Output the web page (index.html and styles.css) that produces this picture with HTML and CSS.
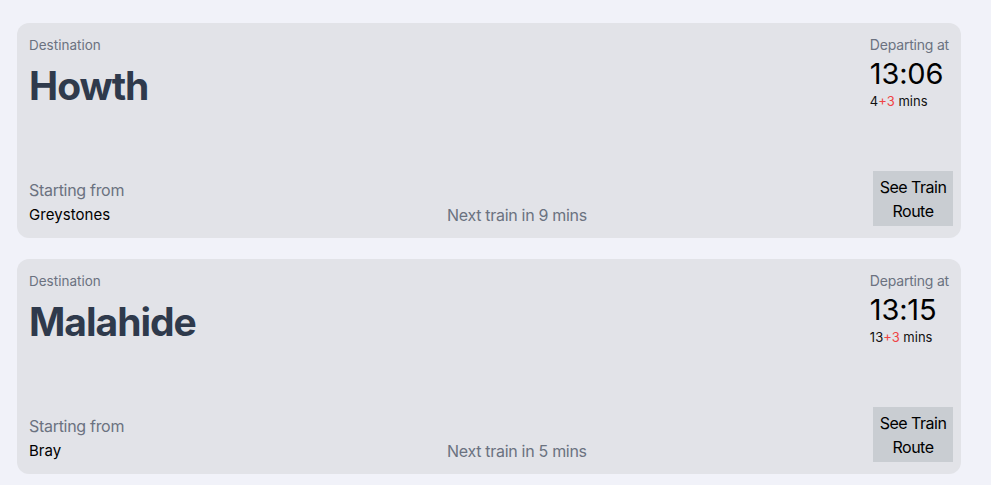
FILE: index.html
```html
<!DOCTYPE html>
<html>
<head>
<meta charset="utf-8">
<link rel="stylesheet" href="styles.css">
</head>
<body>
<main class="list">
  <section class="card">
    <div class="top">
      <div class="dest">
        <div class="label">Destination</div>
        <h1 class="name">Howth</h1>
      </div>
      <div class="depart">
        <div class="label-dep">Departing at</div>
        <div class="time">13:06</div>
        <div class="mins">4<span class="late">+3</span> mins</div>
      </div>
    </div>
    <div class="bottom">
      <div class="origin">
        <div class="sub">Starting from</div>
        <div class="station">Greystones</div>
      </div>
      <div class="next">Next train in 9 mins</div>
      <button class="route">See Train Route</button>
    </div>
  </section>
  <section class="card">
    <div class="top">
      <div class="dest">
        <div class="label">Destination</div>
        <h1 class="name">Malahide</h1>
      </div>
      <div class="depart">
        <div class="label-dep">Departing at</div>
        <div class="time">13:15</div>
        <div class="mins">13<span class="late">+3</span> mins</div>
      </div>
    </div>
    <div class="bottom">
      <div class="origin">
        <div class="sub">Starting from</div>
        <div class="station">Bray</div>
      </div>
      <div class="next">Next train in 5 mins</div>
      <button class="route">See Train Route</button>
    </div>
  </section>
</main>
</body>
</html>
```

FILE: styles.css
```css
html, body {
  margin: 0;
  padding: 0;
  background: #f1f2f9;
  font-family: Inter, "Noto Sans", sans-serif;
}
.list {
  display: flex;
  flex-direction: column;
  gap: 21px;
  padding: 23px 30px 0 17px;
}
.card {
  background: #e2e3e8;
  border-radius: 12px;
  height: 215px;
  box-sizing: border-box;
  padding: 12px 8px 12px 12px;
  display: flex;
  flex-direction: column;
  justify-content: space-between;
}
.top {
  display: flex;
  justify-content: space-between;
  align-items: flex-start;
}
.label {
  font-size: 13.5px;
  line-height: 20px;
  color: #6b7280;
}
.name {
  margin: 6px 0 0;
  font-size: 39px;
  line-height: 50px;
  font-weight: 700;
  color: #2f3a4c;
  letter-spacing: -1px;
}
.depart {
  margin-right: 4px;
}
.label-dep {
  font-size: 14px;
  line-height: 20px;
  color: #6b7280;
  letter-spacing: -0.2px;
}
.time {
  font-size: 29px;
  line-height: 37px;
  color: #000;
  letter-spacing: -0.2px;
}
.mins {
  font-size: 13px;
  line-height: 18px;
  color: #111;
}
.late {
  color: #ef4444;
}
.bottom {
  display: grid;
  grid-template-columns: 418px 1fr auto;
  align-items: end;
}
.origin {
  margin-bottom: -1px;
}
.sub {
  font-size: 16px;
  line-height: 24px;
  color: #6b7280;
  letter-spacing: -0.3px;
}
.station {
  font-size: 15px;
  line-height: 25px;
  color: #000;
  letter-spacing: 0.05px;
}
.next {
  font-size: 16px;
  line-height: 24px;
  color: #6b7280;
  letter-spacing: -0.3px;
  margin-bottom: -1px;
}
.route {
  width: 80px;
  height: 55px;
  border: none;
  border-radius: 0;
  background: #c9cdd2;
  font-family: Inter, "Noto Sans", sans-serif;
  font-size: 16px;
  line-height: 24px;
  color: #000;
  padding: 0;
  letter-spacing: -0.5px;
  text-align: center;
}
```
